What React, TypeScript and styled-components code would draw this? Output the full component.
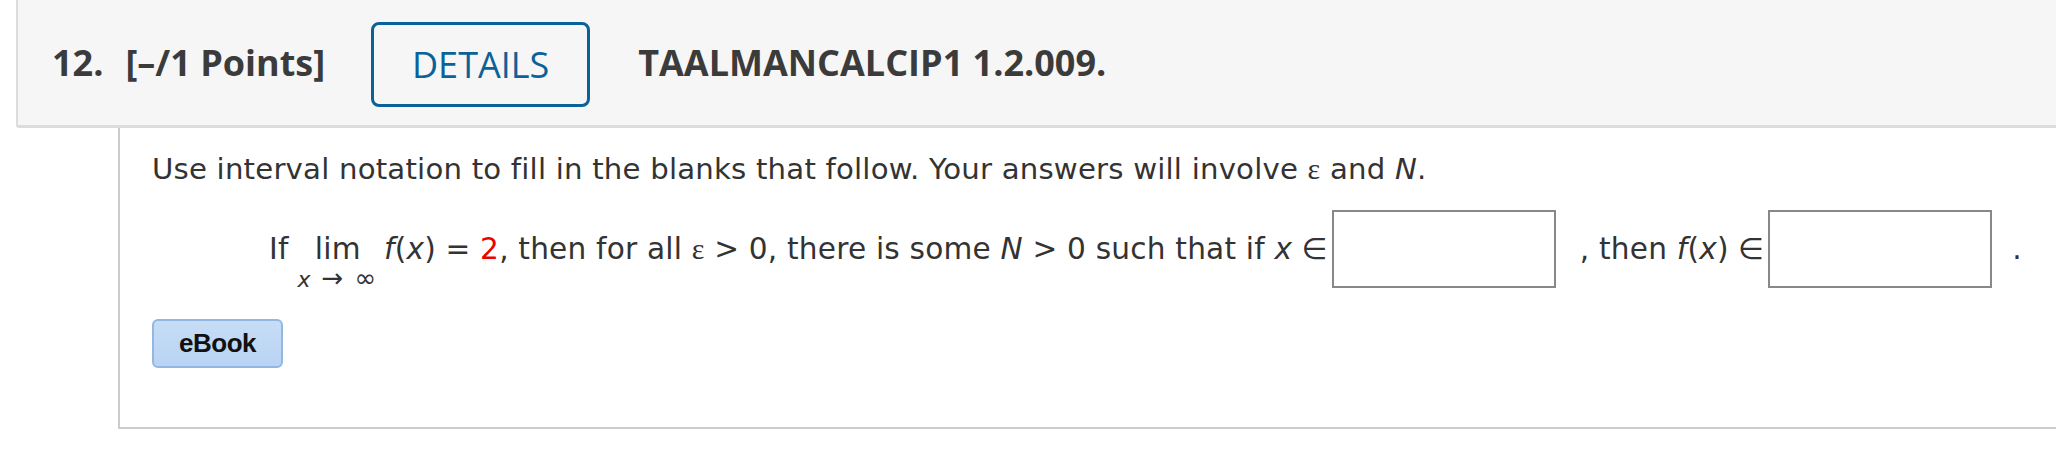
import styled, { createGlobalStyle } from "styled-components";

const GlobalStyle = createGlobalStyle`
  body {
    margin: 0;
    background: #ffffff;
    overflow: hidden;
  }
`;

const Page = styled.div`
  padding-left: 16px;
  width: 2200px;
`;

const Header = styled.div`
  display: flex;
  align-items: center;
  height: 125px;
  padding-left: 34px;
  background: #f6f6f6;
  border-left: 2px solid #dcdcdc;
  border-bottom: 3px solid #dcdcdc;
  border-bottom-left-radius: 3px;
  font-family: "Open Sans", "Liberation Sans", sans-serif;
  color: #3b3b3b;
`;

const Number = styled.span`
  font-size: 36px;
  font-weight: 700;
`;

const Points = styled.span`
  font-size: 36px;
  font-weight: 700;
  margin-left: 22px;
`;

const DetailsButton = styled.button`
  margin-left: 46px;
  margin-top: 4px;
  width: 219px;
  height: 85px;
  border: 3px solid #0b6298;
  border-radius: 8px;
  background: transparent;
  color: #0b6298;
  font-family: "Open Sans", "Liberation Sans", sans-serif;
  font-size: 36px;
  font-weight: 400;
`;

const Title = styled.span`
  margin-left: 48px;
  font-size: 36px;
  font-weight: 700;
`;

const Content = styled.div`
  margin-left: 102px;
  height: 299px;
  border-left: 2px solid #cccccc;
  border-bottom: 2px solid #cccccc;
  padding-left: 32px;
  display: flex;
  flex-direction: column;
  align-items: flex-start;
  font-family: "DejaVu Sans", Verdana, sans-serif;
  color: #333333;
`;

const Prompt = styled.p`
  margin: 23px 0 0;
  font-size: 29.2px;
  letter-spacing: 0.2px;
  line-height: 36px;
`;

const MathRow = styled.div`
  display: flex;
  align-items: flex-start;
  margin: 23px 0 0 117px;
  font-size: 29.6px;
  letter-spacing: 0.2px;
  line-height: 36px;
  white-space: pre;
`;

const Phrase = styled.span<{ $gap?: number }>`
  padding-top: 21px;
  margin-left: ${(p) => p.$gap ?? 0}px;
`;

const Lim = styled.span`
  display: inline-flex;
  flex-direction: column;
  align-items: center;
  margin: 21px 6px 0 9px;
`;

const LimSub = styled.span`
  font-size: 22px;
  line-height: 26px;
  letter-spacing: 2px;
  margin-top: -2px;
`;

const SubSymbol = styled.span`
  font-size: 26px;
`;

const Var = styled.i`
  font-style: italic;
`;

const Eps = styled.span`
  font-family: "Liberation Serif", "DejaVu Serif", serif;
  font-size: 30px;
`;

const Red = styled.span`
  color: #ee0000;
`;

const Blank = styled.input<{ $after?: number }>`
  width: 224px;
  height: 78px;
  box-sizing: border-box;
  border: 2px solid #888888;
  margin: 0 ${(p) => p.$after ?? 15}px 0 4px;
  padding: 0 8px;
  font-size: 24px;
  background: #ffffff;
`;

const EbookButton = styled.button`
  margin-top: 26px;
  width: 131px;
  height: 49px;
  border: 2px solid #92b7e3;
  border-radius: 6px;
  background: linear-gradient(#c7ddf6, #b8d3f3);
  font-family: "Liberation Sans", Arial, sans-serif;
  font-weight: 700;
  font-size: 26px;
  color: #111111;
  letter-spacing: -0.5px;
`;

export default function App() {
  return (
    <>
      <GlobalStyle />
      <Page>
        <Header>
          <Number>12.</Number>
          <Points>[–/1 Points]</Points>
          <DetailsButton>DETAILS</DetailsButton>
          <Title>TAALMANCALCIP1 1.2.009.</Title>
        </Header>
        <Content>
          <Prompt>
            Use interval notation to fill in the blanks that follow. Your
            answers will involve <Eps>ε</Eps> and <Var>N</Var>.
          </Prompt>
          <MathRow>
            <Phrase>If</Phrase>
            <Lim>
              <span>lim</span>
              <LimSub>
                <Var>x</Var> <SubSymbol>→</SubSymbol> <SubSymbol>∞</SubSymbol>
              </LimSub>
            </Lim>
            <Phrase>
              <Var>f</Var>(<Var>x</Var>) = <Red>2</Red>, then for all <Eps>ε</Eps> &gt; 0, there
              is some <Var>N</Var> &gt; 0 such that if <Var>x</Var> ∈
            </Phrase>
            <Blank type="text" aria-label="first interval" $after={0} />
            <Phrase $gap={24}>
              , then <Var>f</Var>(<Var>x</Var>) ∈
            </Phrase>
            <Blank type="text" aria-label="second interval" $after={20} />
            <Phrase>.</Phrase>
          </MathRow>
          <EbookButton>eBook</EbookButton>
        </Content>
      </Page>
    </>
  );
}
